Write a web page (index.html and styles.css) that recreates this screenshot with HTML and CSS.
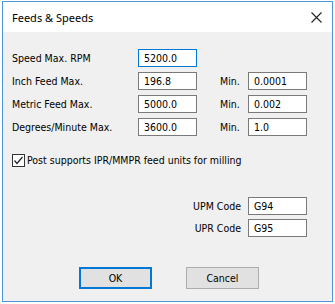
FILE: index.html
```html
<!DOCTYPE html>
<html lang="en">
<head>
    <meta charset="UTF-8">
    <title>Feeds &amp; Speeds</title>
    <link rel="stylesheet" href="styles.css">
</head>
<body>
    <div class="window">
        <div class="titlebar">
            <span class="title">Feeds &amp; Speeds</span>
            <svg class="close" width="11" height="11" viewBox="0 0 11 11">
                <path d="M0.5 0.5 L10.5 10.5 M10.5 0.5 L0.5 10.5" stroke="#222" stroke-width="1.1" fill="none"/>
            </svg>
        </div>
        <div class="content">
            <div class="limits">
                <span class="label">Speed Max. RPM</span>
                <span class="field focus">5200.0</span>
                <span></span><span></span><span></span>

                <span class="label">Inch Feed Max.</span>
                <span class="field">196.8</span>
                <span></span>
                <span class="label">Min.</span>
                <span class="field">0.0001</span>

                <span class="label">Metric Feed Max.</span>
                <span class="field">5000.0</span>
                <span></span>
                <span class="label">Min.</span>
                <span class="field">0.002</span>

                <span class="label">Degrees/Minute Max.</span>
                <span class="field">3600.0</span>
                <span></span>
                <span class="label">Min.</span>
                <span class="field">1.0</span>
            </div>

            <div class="check-row">
                <svg class="checkbox" width="13" height="13" viewBox="0 0 13 13">
                    <rect x="0.5" y="0.5" width="12" height="12" fill="#fff" stroke="#333"/>
                    <path d="M2.5 6.5 L5 9.5 L10.5 3" stroke="#222" stroke-width="1.2" fill="none"/>
                </svg>
                <span>Post supports IPR/MMPR feed units for milling</span>
            </div>

            <div class="codes">
                <div class="code-row">
                    <span class="label">UPM Code</span>
                    <span class="field">G94</span>
                </div>
                <div class="code-row">
                    <span class="label">UPR Code</span>
                    <span class="field">G95</span>
                </div>
            </div>

            <div class="buttons">
                <button class="btn default">OK</button>
                <button class="btn">Cancel</button>
            </div>
        </div>
    </div>
</body>
</html>
```

FILE: styles.css
```css
body {
    margin: 0;
    padding: 1px 2px 0 2px;
    background: #ffffff;
    font-family: 'DejaVu Sans', 'Liberation Sans', sans-serif;
    font-stretch: condensed;
    font-size: 10.5px;
    color: #000;
}

.window {
    width: 331px;
    height: 301px;
    box-sizing: border-box;
    border: 1px solid #4f95dc;
    background: #f0f0f0;
    display: flex;
    flex-direction: column;
}

.titlebar {
    height: 30px;
    background: #fff;
    display: flex;
    align-items: center;
    justify-content: space-between;
    padding: 0 10px 0 9px;
}

.title {
    font-family: 'Noto Sans', 'Liberation Sans', sans-serif;
    font-stretch: normal;
    font-size: 11px;
    color: #000;
}

.close {
    margin-top: 1px;
}

.content {
    display: flex;
    flex-direction: column;
    padding: 17px 0 0 9px;
}

.limits {
    display: grid;
    grid-template-columns: 126px 59px 23px 28px 59px;
    grid-auto-rows: 18px;
    row-gap: 5px;
    align-items: center;
}

.field {
    height: 18px;
    box-sizing: border-box;
    border: 1px solid #7a7a7a;
    background: #fff;
    padding: 0 5px;
    display: flex;
    align-items: center;
    color: #000;
}

.field.focus {
    border-color: #0078d7;
}

.check-row {
    display: flex;
    align-items: center;
    gap: 2px;
    margin-top: 16px;
    height: 16px;
}

.codes {
    display: flex;
    flex-direction: column;
    align-items: flex-end;
    gap: 4px;
    margin-top: 29px;
    padding-right: 25px;
}

.code-row {
    display: flex;
    align-items: center;
    gap: 7px;
}

.code-row .field {
    width: 59px;
}

.buttons {
    display: flex;
    gap: 34px;
    margin-top: 30px;
    padding-left: 67px;
}

.btn {
    width: 73px;
    height: 22px;
    box-sizing: border-box;
    border: 1px solid #adadad;
    background: #e1e1e1;
    font-family: inherit;
    font-stretch: condensed;
    font-size: 10.5px;
    color: #000;
    padding: 0;
}

.btn.default {
    border: 2px solid #0078d7;
}
```
